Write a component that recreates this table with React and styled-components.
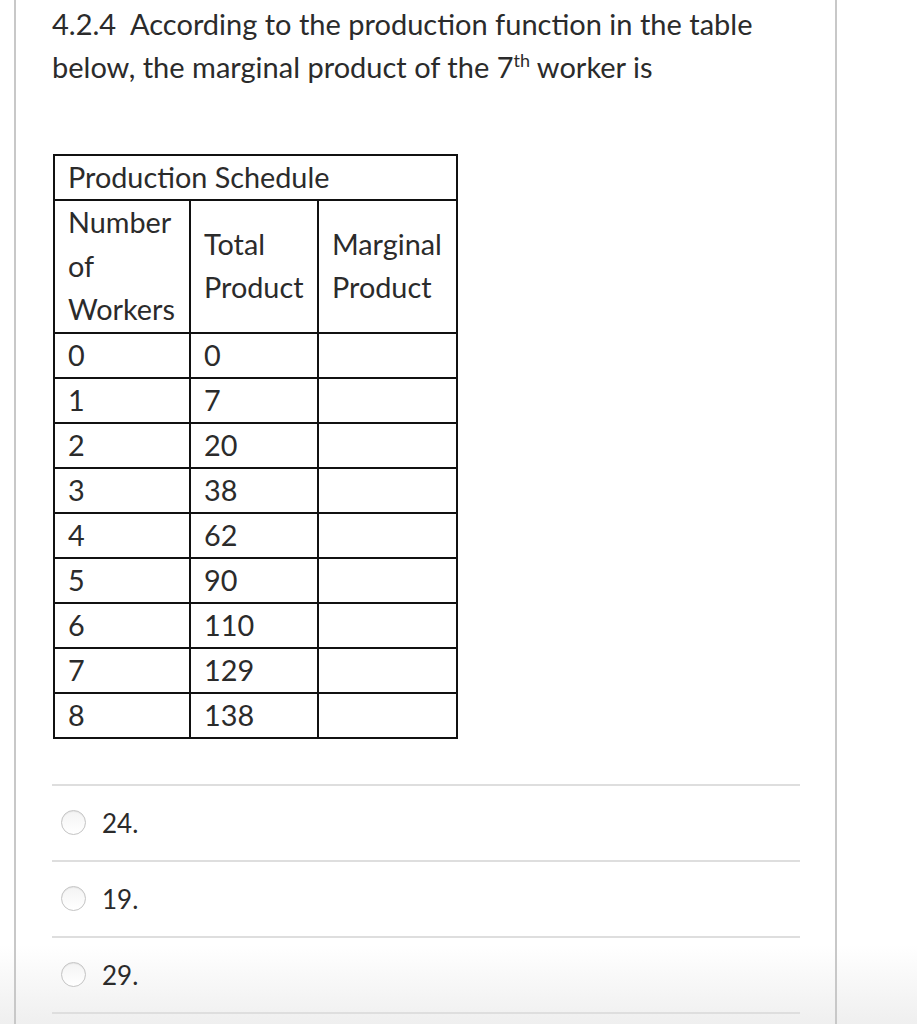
import React from 'react'
import styled, { createGlobalStyle } from "styled-components";

const GlobalStyle = createGlobalStyle`
  html, body {
    margin: 0;
    padding: 0;
  }
  body {
    font-family: Lato, "Open Sans", sans-serif;
    color: #2b2b2b;
    min-height: 1024px;
    background: linear-gradient(to bottom, #ffffff 0px, #ffffff 945px, #efefef 1024px);
  }
`;

const rows = [
  ["0", "0"],
  ["1", "7"],
  ["2", "20"],
  ["3", "38"],
  ["4", "62"],
  ["5", "90"],
  ["6", "110"],
  ["7", "129"],
  ["8", "138"],
];

const answers = ["24.", "19.", "29."];

function App() {
  return (
    <>
      <GlobalStyle />
      <Frame>
        <Question>
          4.2.4&nbsp; According to the production function in the table below, the marginal product of the 7<Sup>th</Sup> worker is
        </Question>
        <Schedule>
          <colgroup>
            <Col $w={136} />
            <Col $w={128} />
            <Col $w={139} />
          </colgroup>
          <tbody>
            <tr>
              <Cell colSpan={3}>Production Schedule</Cell>
            </tr>
            <tr>
              <HeadCell>Number<br />of<br />Workers</HeadCell>
              <HeadCell>Total<br />Product</HeadCell>
              <HeadCell>Marginal<br />Product</HeadCell>
            </tr>
            {rows.map(([w, tp]) => (
              <tr key={w}>
                <Cell>{w}</Cell>
                <Cell>{tp}</Cell>
                <Cell></Cell>
              </tr>
            ))}
          </tbody>
        </Schedule>
        <Answers>
          {answers.map((a) => (
            <Answer key={a}>
              <Radio />
              <AnswerText>{a}</AnswerText>
            </Answer>
          ))}
        </Answers>
      </Frame>
    </>
  )
}

export default App

const Frame = styled.div`
  margin-left: 14px;
  width: 823px;
  min-height: 1024px;
  box-sizing: border-box;
  border-left: 2px solid #c8c8c8;
  border-right: 2px solid #c8c8c8;
  padding: 2px 35px 0 36px;
`;

const Question = styled.p`
  margin: 0;
  font-size: 29px;
  line-height: 43px;
  color: #2b2b2b;
  max-width: 730px;
`;

const Sup = styled.sup`
  font-size: 18px;
  line-height: 0;
  vertical-align: 11px;
`;

const Schedule = styled.table`
  margin-top: 66px;
  margin-left: 1px;
  border-collapse: collapse;
  table-layout: fixed;
  width: 403px;
  border: 2px solid #111;
  font-size: 28.8px;
  color: #2b2b2b;
`;

const Col = styled.col`
  width: ${(p) => p.$w}px;
`;

const Cell = styled.td`
  border: 2px solid #111;
  padding: 0 13px;
  line-height: 43px;
  height: 43px;
  vertical-align: middle;
  white-space: nowrap;
`;

const HeadCell = styled(Cell)`
  line-height: 43.5px;
  height: auto;
  padding-left: 13px;
  padding-right: 0;
`;

const Answers = styled.div`
  margin-top: 45px;
  width: 748px;
  border-top: 2px solid #dedede;
`;

const Answer = styled.label`
  display: flex;
  align-items: center;
  gap: 16px;
  height: 74px;
  padding-left: 9px;
  border-bottom: 2px solid #dedede;
`;

const Radio = styled.span`
  width: 23px;
  height: 23px;
  border-radius: 50%;
  border: 1px solid #c4c4c4;
  background: linear-gradient(to bottom, #f4f4f4, #ffffff);
  box-shadow: inset 0 1px 1px rgba(0, 0, 0, 0.06);
  flex: none;
`;

const AnswerText = styled.span`
  font-size: 26px;
  color: #2b2b2b;
`;
